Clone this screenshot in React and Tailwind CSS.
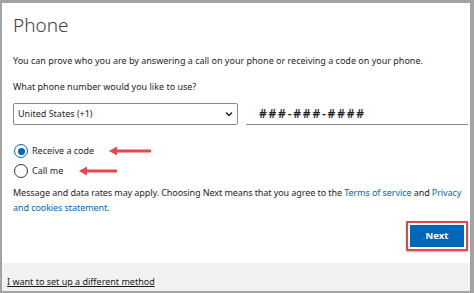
import React from "react";

function Arrow({ width }) {
  return (
    <svg width={width} height="12" viewBox={`0 0 ${width} 12`} className="block">
      <line x1="6" y1="6" x2={width - 1} y2="6" stroke="#e8474a" strokeWidth="3" strokeLinecap="round" />
      <path d="M1 6 L9 1.5 L9 10.5 Z" fill="#e8474a" />
    </svg>
  );
}

function Radio({ checked }) {
  return checked ? (
    <span className="flex h-[14px] w-[14px] items-center justify-center rounded-full border border-[#0067b8] bg-white">
      <span className="h-[7px] w-[7px] rounded-full bg-[#0067b8]" />
    </span>
  ) : (
    <span className="h-[14px] w-[14px] rounded-full border border-[#333]" />
  );
}

export default function App() {
  return (
    <div
      className="flex h-[293px] w-[474px] flex-col border-b-[2px] border-l-[2px] border-r-[4px] border-t-[3px] border-[#a3a3a3] bg-white text-[#262626]"
      style={{ fontFamily: '"Noto Sans", "Open Sans", sans-serif' }}
    >
      <div className="flex flex-1 flex-col pl-[11px] pr-[2px]">
        <h1 className="mt-[10px] text-[19px] font-light leading-[24px] text-[#404040]">Phone</h1>
        <p className="mt-[17px] text-[9px] leading-[14px]">
          You can prove who you are by answering a call on your phone or receiving a code on your phone.
        </p>
        <p className="mt-[12px] text-[9px] leading-[14px]">What phone number would you like to use?</p>
        <div className="mt-[9px] flex items-end gap-[8px]">
          <div className="flex h-[22px] w-[225px] items-center justify-between rounded-[2px] border border-[#8a8a8a] px-[4px] text-[9px]">
            <span>United States (+1)</span>
            <svg width="8" height="6" viewBox="0 0 8 6">
              <path d="M1 1.5 L4 4.5 L7 1.5" fill="none" stroke="#222" strokeWidth="1.5" />
            </svg>
          </div>
          <div className="flex h-[22px] flex-1 items-center border-b border-[#8a8a8a] pl-[13px] text-[12px] font-semibold tracking-[1.8px] text-[#222]">
            ###-###-####
          </div>
        </div>
        <div className="mt-[19px] flex items-center gap-[4px] pl-[1px] text-[9px]">
          <Radio checked />
          <span>Receive a code</span>
          <span className="ml-[10px]">
            <Arrow width={43} />
          </span>
        </div>
        <div className="mt-[6px] flex items-center gap-[4px] pl-[1px] text-[9px]">
          <Radio />
          <span>Call me</span>
          <span className="ml-[11px]">
            <Arrow width={39} />
          </span>
        </div>
        <div className="mt-[7px] text-[9px] leading-[15px] tracking-[-0.08px]">
          <div>
            Message and data rates may apply. Choosing Next means that you agree to the{" "}
            <span className="text-[#0067b8]">Terms of service</span> and{" "}
            <span className="text-[#0067b8]">Privacy</span>
          </div>
          <div>
            <span className="text-[#0067b8]">and cookies statement</span>.
          </div>
        </div>
        <div className="mt-[6px] flex justify-end">
          <div className="rounded-[1px] border-2 border-[#e2464a] p-[2px] shadow-[0_1px_2px_rgba(0,0,0,0.3)]">
            <div className="flex h-[22px] w-[54px] items-center justify-center bg-[#0067b8] text-[9.5px] font-bold text-white">
              Next
            </div>
          </div>
        </div>
      </div>
      <div className="flex h-[28px] items-end bg-[#f2f2f2] px-[5px] pb-[3px]">
        <span className="text-[9px] text-[#1a1a1a] underline">I want to set up a different method</span>
      </div>
    </div>
  );
}
